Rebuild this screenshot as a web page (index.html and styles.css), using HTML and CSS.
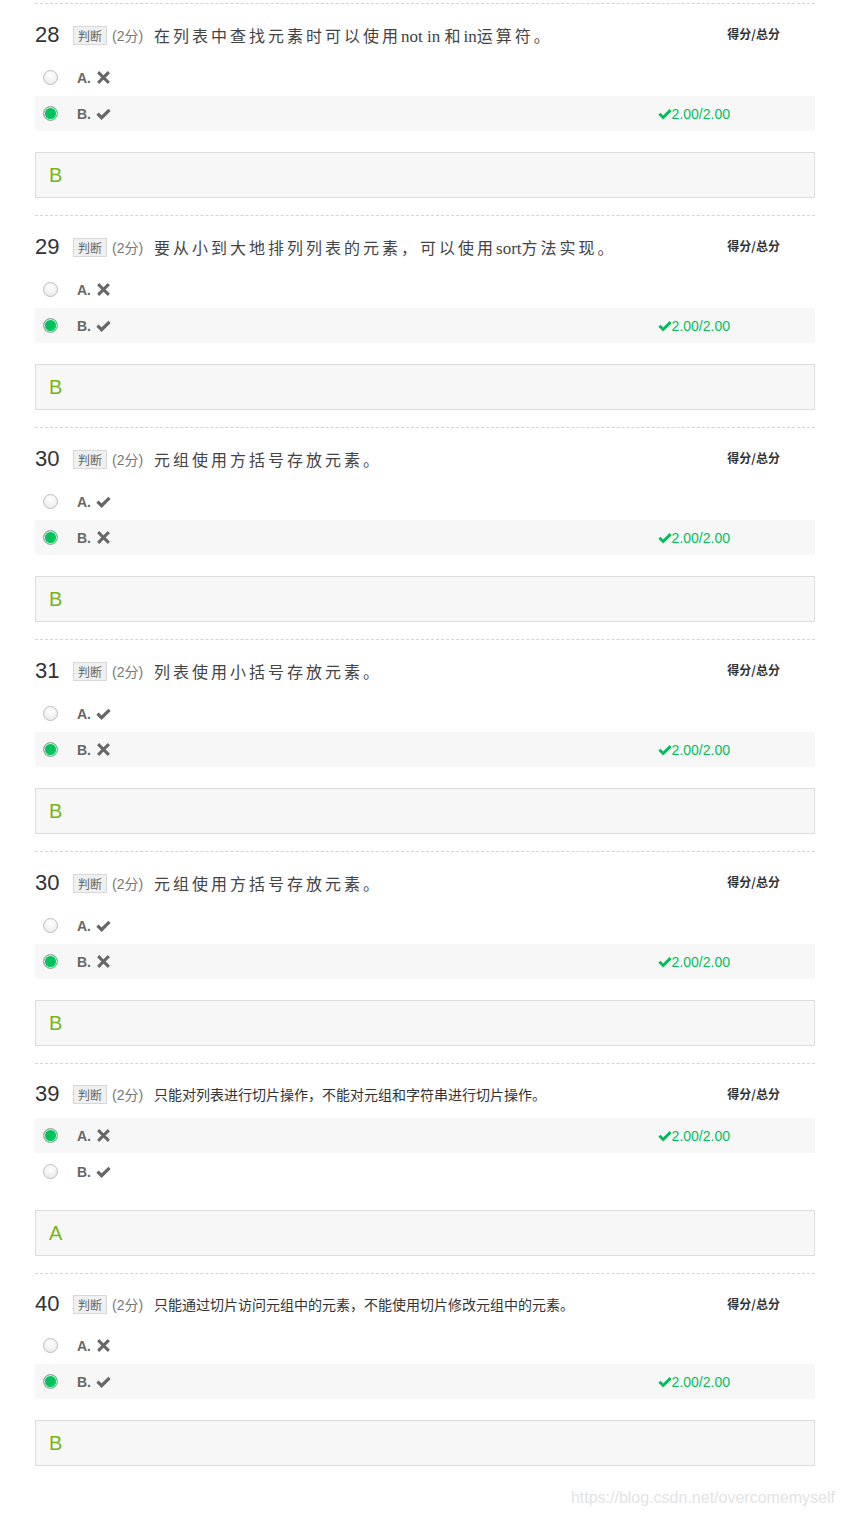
FILE: index.html
```html
<!DOCTYPE html>
<html lang="zh-CN">
<head>
    <meta charset="UTF-8">
    <title>作业详情</title>
    <link rel="stylesheet" href="styles.css">
</head>
<body>
    <svg class="defs" width="0" height="0">
        <symbol id="i-x" viewBox="0 0 14 14">
            <path d="M2 2 L12 12 M12 2 L2 12" fill="none" stroke="currentColor" stroke-width="2.7"/>
        </symbol>
        <symbol id="i-ok" viewBox="0 0 14 11">
            <path d="M1.4 5.2 L5.2 9 L12.6 1.6" fill="none" stroke="currentColor" stroke-width="3"/>
        </symbol>
    </svg>

    <div class="page">
        <!-- 28 -->
        <div class="question">
            <div class="q-head">
                <span class="q-num">28</span>
                <span class="q-type">判断</span>
                <span class="q-score">(2分)</span>
                <span class="q-text">在列表中查找元素时可以使用<span class="latin">not in </span>和<span class="latin">in</span>运算符。</span>
                <span class="q-label">得分/总分</span>
            </div>
            <div class="option">
                <span class="radio"></span>
                <span class="opt-key">A.</span>
                <svg class="icon-x"><use href="#i-x"/></svg>
            </div>
            <div class="option checked">
                <span class="radio"></span>
                <span class="opt-key">B.</span>
                <svg class="icon-ok"><use href="#i-ok"/></svg>
                <span class="got"><svg class="icon-got"><use href="#i-ok"/></svg>2.00/2.00</span>
            </div>
            <div class="answer">B</div>
        </div>

        <!-- 29 -->
        <div class="question">
            <div class="q-head">
                <span class="q-num">29</span>
                <span class="q-type">判断</span>
                <span class="q-score">(2分)</span>
                <span class="q-text">要从小到大地排列列表的元素，可以使用<span class="latin">sort</span>方法实现。</span>
                <span class="q-label">得分/总分</span>
            </div>
            <div class="option">
                <span class="radio"></span>
                <span class="opt-key">A.</span>
                <svg class="icon-x"><use href="#i-x"/></svg>
            </div>
            <div class="option checked">
                <span class="radio"></span>
                <span class="opt-key">B.</span>
                <svg class="icon-ok"><use href="#i-ok"/></svg>
                <span class="got"><svg class="icon-got"><use href="#i-ok"/></svg>2.00/2.00</span>
            </div>
            <div class="answer">B</div>
        </div>

        <!-- 30 -->
        <div class="question">
            <div class="q-head">
                <span class="q-num">30</span>
                <span class="q-type">判断</span>
                <span class="q-score">(2分)</span>
                <span class="q-text">元组使用方括号存放元素。</span>
                <span class="q-label">得分/总分</span>
            </div>
            <div class="option">
                <span class="radio"></span>
                <span class="opt-key">A.</span>
                <svg class="icon-ok"><use href="#i-ok"/></svg>
            </div>
            <div class="option checked">
                <span class="radio"></span>
                <span class="opt-key">B.</span>
                <svg class="icon-x"><use href="#i-x"/></svg>
                <span class="got"><svg class="icon-got"><use href="#i-ok"/></svg>2.00/2.00</span>
            </div>
            <div class="answer">B</div>
        </div>

        <!-- 31 -->
        <div class="question">
            <div class="q-head">
                <span class="q-num">31</span>
                <span class="q-type">判断</span>
                <span class="q-score">(2分)</span>
                <span class="q-text">列表使用小括号存放元素。</span>
                <span class="q-label">得分/总分</span>
            </div>
            <div class="option">
                <span class="radio"></span>
                <span class="opt-key">A.</span>
                <svg class="icon-ok"><use href="#i-ok"/></svg>
            </div>
            <div class="option checked">
                <span class="radio"></span>
                <span class="opt-key">B.</span>
                <svg class="icon-x"><use href="#i-x"/></svg>
                <span class="got"><svg class="icon-got"><use href="#i-ok"/></svg>2.00/2.00</span>
            </div>
            <div class="answer">B</div>
        </div>

        <!-- 30 again -->
        <div class="question">
            <div class="q-head">
                <span class="q-num">30</span>
                <span class="q-type">判断</span>
                <span class="q-score">(2分)</span>
                <span class="q-text">元组使用方括号存放元素。</span>
                <span class="q-label">得分/总分</span>
            </div>
            <div class="option">
                <span class="radio"></span>
                <span class="opt-key">A.</span>
                <svg class="icon-ok"><use href="#i-ok"/></svg>
            </div>
            <div class="option checked">
                <span class="radio"></span>
                <span class="opt-key">B.</span>
                <svg class="icon-x"><use href="#i-x"/></svg>
                <span class="got"><svg class="icon-got"><use href="#i-ok"/></svg>2.00/2.00</span>
            </div>
            <div class="answer">B</div>
        </div>

        <!-- 39 -->
        <div class="question">
            <div class="q-head small">
                <span class="q-num">39</span>
                <span class="q-type">判断</span>
                <span class="q-score">(2分)</span>
                <span class="q-text">只能对列表进行切片操作，不能对元组和字符串进行切片操作。</span>
                <span class="q-label">得分/总分</span>
            </div>
            <div class="option checked">
                <span class="radio"></span>
                <span class="opt-key">A.</span>
                <svg class="icon-x"><use href="#i-x"/></svg>
                <span class="got"><svg class="icon-got"><use href="#i-ok"/></svg>2.00/2.00</span>
            </div>
            <div class="option">
                <span class="radio"></span>
                <span class="opt-key">B.</span>
                <svg class="icon-ok"><use href="#i-ok"/></svg>
            </div>
            <div class="answer">A</div>
        </div>

        <!-- 40 -->
        <div class="question">
            <div class="q-head small">
                <span class="q-num">40</span>
                <span class="q-type">判断</span>
                <span class="q-score">(2分)</span>
                <span class="q-text">只能通过切片访问元组中的元素，不能使用切片修改元组中的元素。</span>
                <span class="q-label">得分/总分</span>
            </div>
            <div class="option">
                <span class="radio"></span>
                <span class="opt-key">A.</span>
                <svg class="icon-x"><use href="#i-x"/></svg>
            </div>
            <div class="option checked">
                <span class="radio"></span>
                <span class="opt-key">B.</span>
                <svg class="icon-ok"><use href="#i-ok"/></svg>
                <span class="got"><svg class="icon-got"><use href="#i-ok"/></svg>2.00/2.00</span>
            </div>
            <div class="answer">B</div>
        </div>
    </div>

    <div class="watermark">https://blog.csdn.net/overcomemyself</div>
</body>
</html>
```

FILE: styles.css
```css
* {
    margin: 0;
    padding: 0;
    box-sizing: border-box;
}

body {
    background-color: #fff;
    font-family: 'Liberation Sans', Arial, 'Noto Sans CJK SC', sans-serif;
    color: #333;
    padding-top: 3px;
}

.defs {
    position: absolute;
    width: 0;
    height: 0;
}

.page {
    margin-left: 35px;
    width: 780px;
}

.question {
    border-top: 1px dashed #d4d4d4;
    padding: 16px 0 17px;
}

.q-head {
    display: flex;
    align-items: center;
    height: 30px;
    margin-bottom: 10px;
}

.q-head.small {
    height: 28px;
}

.q-num {
    font-size: 22px;
    color: #333;
    width: 38px;
}

.q-type {
    font-size: 12px;
    line-height: 17px;
    padding: 0 4px;
    color: #666;
    background-color: #f0f0f0;
    border: 1px solid #d8d8d8;
    font-family: 'Noto Sans CJK SC', sans-serif;
}

.q-score {
    font-size: 14px;
    color: #777;
    margin-left: 5px;
    width: 42px;
}

.q-text {
    flex: 1;
    font-family: 'Liberation Serif', 'Noto Sans CJK SC', serif;
    font-size: 16px;
    letter-spacing: 3px;
    color: #444;
}

.q-text .latin {
    font-size: 17px;
    letter-spacing: 0;
}

.q-head.small .q-text {
    font-family: 'Noto Sans CJK SC', sans-serif;
    font-size: 14px;
    letter-spacing: 0;
    color: #333;
}

.q-label {
    font-size: 12px;
    font-weight: bold;
    color: #333;
    margin-right: 35px;
    align-self: flex-start;
    margin-top: 5px;
    font-family: 'Noto Sans CJK SC', sans-serif;
}

.option {
    display: flex;
    align-items: center;
    height: 35px;
    padding-left: 8px;
    margin-bottom: 1px;
}

.option.checked {
    background-color: #f7f7f7;
}

.radio {
    width: 15px;
    height: 15px;
    border-radius: 50%;
    border: 1px solid #bdbdbd;
    background: radial-gradient(circle at 50% 35%, #fff 0%, #e6e6e6 100%);
    margin-right: 19px;
}

.option.checked .radio {
    border-color: #a8a8a8;
    background: #00c25a;
    box-shadow: inset 0 0 0 1px #e8e8e8;
}

.opt-key {
    font-size: 14px;
    font-weight: bold;
    color: #666;
    width: 19px;
}

.icon-x {
    width: 15px;
    height: 15px;
    color: #666;
}

.icon-ok {
    width: 15px;
    height: 12px;
    color: #666;
}

.got {
    margin-left: auto;
    margin-right: 85px;
    font-size: 14px;
    color: #00be5a;
    display: flex;
    align-items: center;
}

.icon-got {
    width: 14px;
    height: 12px;
    color: #00be5a;
}

.answer {
    margin-top: 21px;
    height: 46px;
    border: 1px solid #dcdcdc;
    background-color: #f7f7f7;
    padding-left: 13px;
    font-size: 20px;
    line-height: 44px;
    color: #77b414;
}

.watermark {
    text-align: right;
    padding-right: 10px;
    margin-top: 6px;
    font-size: 16px;
    color: #e3e3e3;
}
```
